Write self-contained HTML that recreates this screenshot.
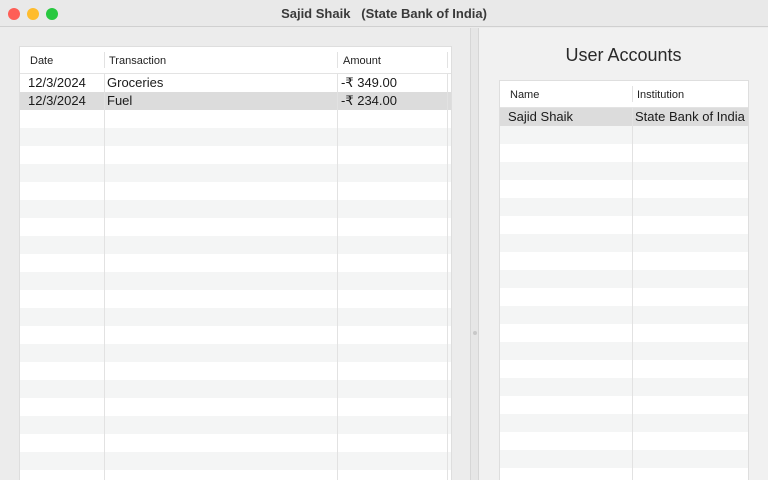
<!DOCTYPE html>
<html><head><style>
*{margin:0;padding:0;box-sizing:border-box}
html,body{width:768px;height:480px;overflow:hidden}
body{background:#ececec;font-family:"Liberation Sans",sans-serif;position:relative}
.title{position:absolute;left:0;top:0;width:768px;height:27px;background:#e9e9e9;border-bottom:1px solid #d0d0d0;text-align:center;font-size:13px;font-weight:bold;color:#3a3a3a;line-height:27px}
.dot{position:absolute;top:8px;width:12px;height:12px;border-radius:50%}
.pane{position:absolute;top:28px;height:452px}
.tbl{position:absolute;background:#fff;border:1px solid #dedede;border-bottom:none;overflow:hidden}
.hdr{position:absolute;left:0;right:0;top:0;height:27px;border-bottom:1px solid #e3e3e3;font-size:11px;color:#222;background:#fff}
.hdr span{position:absolute;top:8px}
.row{position:absolute;left:0;right:0;height:18px;font-size:13px;color:#1a1a1a;line-height:18px}
.row span{position:absolute}
.vl{position:absolute;top:0;bottom:0;width:1px;background:#e2e2e2}
</style></head><body>
<div class="title">Sajid Shaik &nbsp;&nbsp;(State Bank of India)</div>
<div class="dot" style="left:8px;background:#fe5f57"></div>
<div class="dot" style="left:27px;background:#febc2e"></div>
<div class="dot" style="left:46px;background:#28c840"></div>

<div class="pane" style="left:0;width:470px;background:#ececec"></div>
<div class="pane" style="left:470px;width:9px;background:#e6e6e6;border-left:1px solid #d6d6d6;border-right:1px solid #d6d6d6"></div>
<div class="pane" style="left:479px;width:289px;background:#f1f1f1"></div>
<div style="position:absolute;left:473px;top:331px;width:4px;height:4px;border-radius:50%;background:#c8c8c8"></div>

<div class="tbl" style="left:19px;top:46px;width:433px;height:434px" id="L"></div>
<div style="position:absolute;left:479px;top:45px;width:289px;text-align:center;font-size:18px;color:#2a2a2a">User Accounts</div>
<div class="tbl" style="left:499px;top:80px;width:250px;height:400px" id="R"></div>
<script>
function build(id,rowsTop,n,cols,hdrs,data,colPos,last){
 var t=document.getElementById(id),h='';
 for(var i=0;i<n;i++){
  var bg=i%2?'#f4f5f5':'#fff';
  if(i==data.sel)bg='#dcdcdc';
  var ht=(i==n-1)?last:18;
  h+='<div class="row" style="top:'+(rowsTop+i*18)+'px;height:'+ht+'px;background:'+bg+'">';
  if(data.rows[i])data.rows[i].forEach(function(c,j){h+='<span style="left:'+colPos[j]+'px">'+c+'</span>'});
  h+='</div>';
 }
 cols.forEach(function(x){h+='<div class="vl" style="left:'+x+'px"></div>'});
 h+='<div class="hdr">';
 hdrs.forEach(function(c,j){h+='<span style="left:'+c[1]+'px">'+c[0]+'</span>'});
 cols.forEach(function(x){h+='<div class="vl" style="left:'+x+'px;top:5px;bottom:5px"></div>'});
 h+='</div>';
 t.innerHTML=h;
}
build('L',27,23,[84,317,427],[['Date',10],['Transaction',89],['Amount',323]],{sel:1,rows:[['12/3/2024','Groceries','-₹ 349.00'],['12/3/2024','Fuel','-₹ 234.00']]},[8,87,321],11);
build('R',27,21,[132],[['Name',10],['Institution',137]],{sel:0,rows:[['Sajid Shaik','State Bank of India']]},[8,135],13);
</script>
</body></html>
